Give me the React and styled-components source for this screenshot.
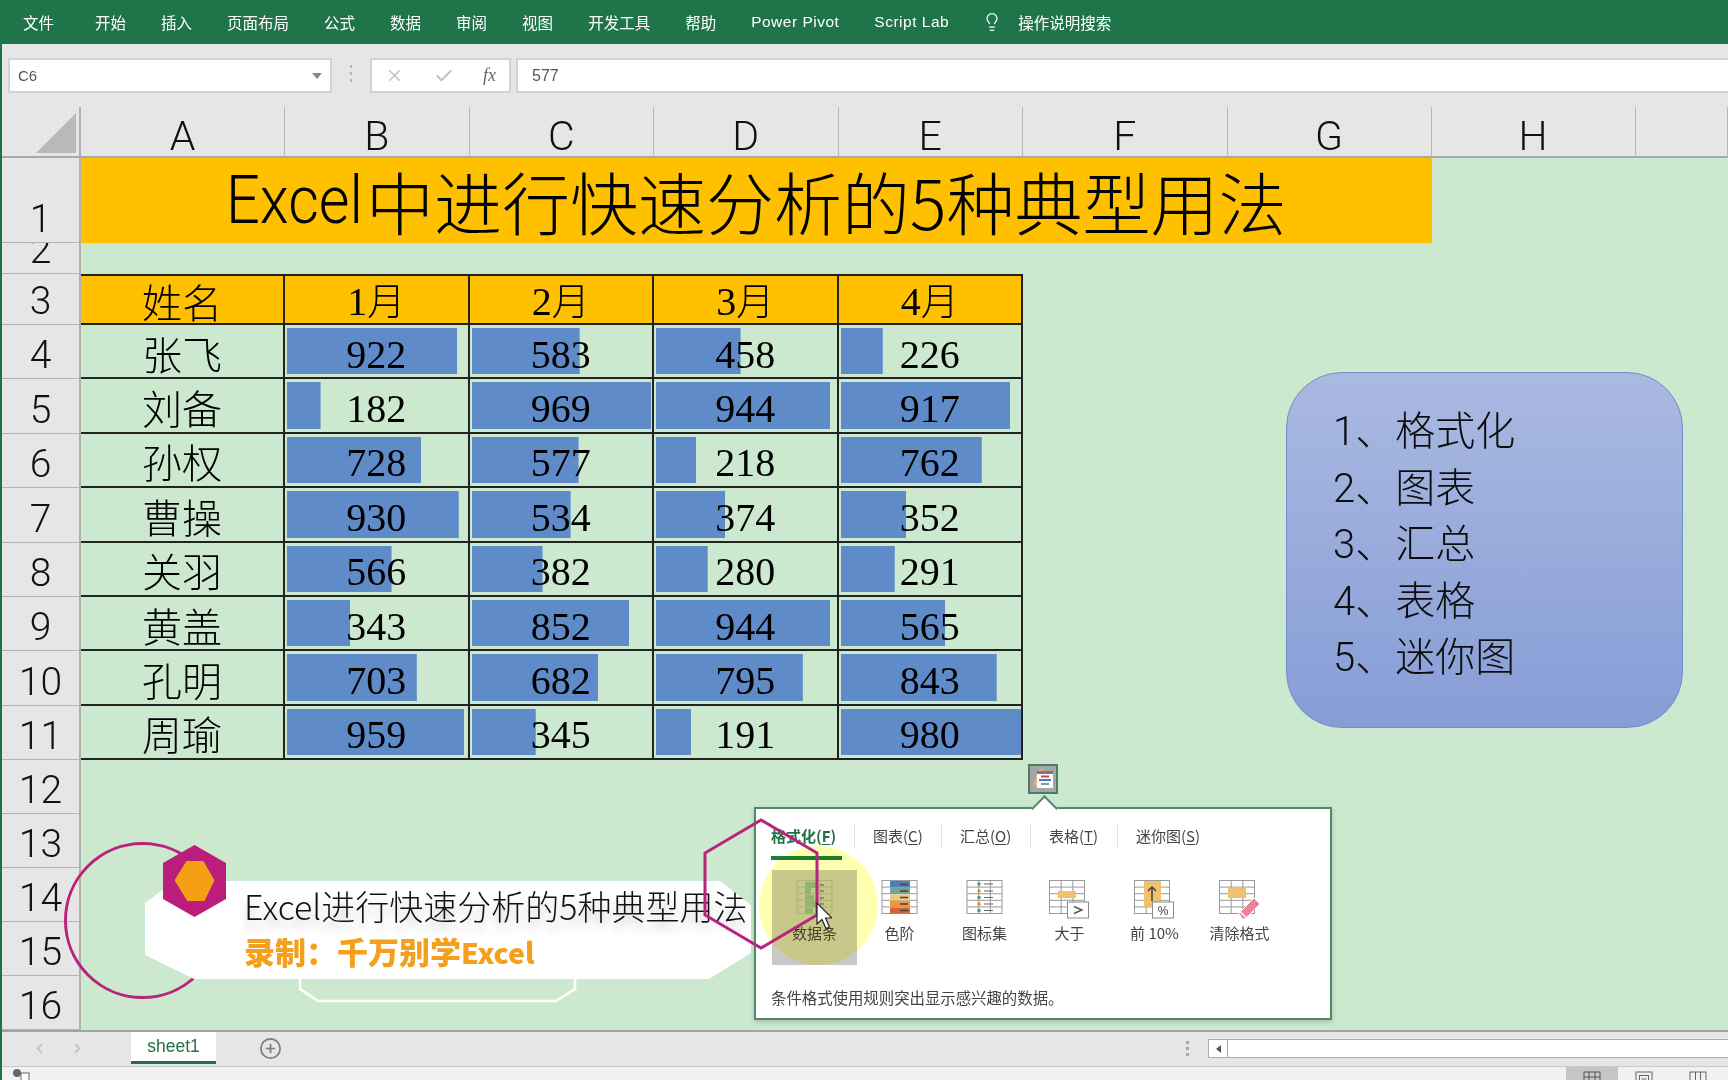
import React from 'react';
import styled, { createGlobalStyle } from 'styled-components';
import { Check, ChevronLeft, ChevronRight, CirclePlus, Lightbulb, X } from 'lucide-react';

const CJK = '"Noto Sans CJK SC", "Liberation Sans", sans-serif';
const GREEN = '#217346';
const MAGENTA = '#b8237b';

const GlobalStyle = createGlobalStyle`
  html, body { margin: 0; padding: 0; background: #e6e6e6; }
  * { box-sizing: border-box; }
`;

const Page = styled.div`
  position: relative;
  display: flex;
  flex-direction: column;
  width: 1728px;
  height: 1080px;
  overflow: hidden;
  font-family: ${CJK};
`;

/* ---------- ribbon ---------- */
const Ribbon = styled.div`
  display: flex;
  align-items: center;
  flex: 0 0 44px;
  gap: 35px;
  padding-left: 23px;
  background: #20744a;
  color: #fff;
  font-size: 15.5px;
`;
const RibbonTab = styled.span`
  margin-right: ${(p) => (p.$first ? '6px' : '0')};
  letter-spacing: ${(p) => (p.$latin ? '0.5px' : '0')};
  font-family: ${(p) => (p.$latin ? '"Liberation Sans", sans-serif' : CJK)};
  white-space: nowrap;
`;
const SearchHint = styled.span`
  display: flex;
  align-items: center;
  gap: 16px;
  margin-left: -2px;
`;

/* ---------- formula bar ---------- */
const Body = styled.div`
  display: flex;
  flex-direction: column;
  flex: 1;
  min-height: 0;
  border-left: 2px solid ${GREEN};
`;
const FormulaBar = styled.div`
  display: flex;
  align-items: flex-start;
  flex: 0 0 63px;
  padding: 14px 0 0 6px;
  background: #e6e6e6;
`;
const Field = styled.div`
  display: flex;
  align-items: center;
  height: 35px;
  background: #fff;
  border: 2px solid #d2d2d2;
  color: #555;
  font-size: 15px;
  font-family: "Liberation Sans", sans-serif;
`;
const NameBox = styled(Field)`
  justify-content: space-between;
  width: 324px;
  padding: 0 8px;
`;
const Caret = styled.span`
  width: 0;
  height: 0;
  border-left: 5px solid transparent;
  border-right: 5px solid transparent;
  border-top: 6px solid #888;
`;
const Grip = styled.span`
  width: 2px;
  height: 20px;
  margin: 7px 18px 0 18px;
  background: repeating-linear-gradient(#b5b5b5 0 3px, transparent 3px 7px);
`;
const ActionBox = styled(Field)`
  justify-content: space-between;
  width: 141px;
  margin-right: 5px;
  padding: 0 13px;
`;
const FxMark = styled.span`
  color: #666;
  font: italic 18px "Liberation Serif", serif;
`;
const FormulaInput = styled(Field)`
  flex: 1;
  padding-left: 14px;
  border-right: 0;
  font-size: 16px;
`;

/* ---------- sheet ---------- */
const Sheet = styled.div`
  display: grid;
  grid-template-columns: 79px 204px repeat(4, 184.5px) 204.5px 204px 204px 1fr;
  grid-template-rows: 51px 85px 31px 51px repeat(8, 54.375px) repeat(5, 54px);
  flex: 0 0 923px;
  background: #cce8cf;
  overflow: hidden;
`;
const Corner = styled.div`
  display: flex;
  align-items: flex-end;
  justify-content: flex-end;
  padding: 0 3px 3px 0;
  background: #e6e6e6;
  border-bottom: 2px solid #a8a8a8;
  border-right: 2px solid #b0b0b0;
`;
const SelectAll = styled.span`
  width: 40px;
  height: 40px;
  background: #b9b9b9;
  clip-path: polygon(100% 0, 100% 100%, 0 100%);
`;
const ColHead = styled.div`
  display: flex;
  align-items: center;
  justify-content: center;
  padding-top: 9px;
  background: #e6e6e6;
  border-bottom: 2px solid #a8a8a8;
  border-right: 1.5px solid #b8b8b8;
  color: #111;
  font: 300 41px Roboto, "Liberation Sans", sans-serif;
`;
const RowHead = styled.div`
  grid-column: 1;
  display: flex;
  align-items: flex-end;
  justify-content: center;
  padding-bottom: 1px;
  background: #e6e6e6;
  border-bottom: 1.5px solid #b4b4b4;
  border-right: 2px solid #b0b0b0;
  color: #111;
  font: 300 39px/1 Roboto, "Liberation Sans", sans-serif;
  overflow: hidden;
  span { margin-bottom: 2px; }
`;
const TitleCell = styled.div`
  grid-column: 2 / span 7;
  display: flex;
  align-items: center;
  justify-content: center;
  background: #ffc000;
  color: #000;
  font-size: 68px;
  font-weight: 300;
  line-height: 1;
  white-space: nowrap;
`;
const TitleLatin = styled.span`
  display: inline-block;
  margin-right: -12px;
  font: 300 66px Roboto, "Liberation Sans", sans-serif;
  transform: scaleX(0.9);
  transform-origin: left center;
`;
const Cell = styled.div`
  display: flex;
  align-items: center;
  justify-content: center;
  border-right: 2px solid #222;
  border-bottom: 2px solid #222;
  border-top: ${(p) => (p.$top ? '2px solid #222' : '0')};
  background-color: ${(p) => (p.$head ? '#ffc000' : 'transparent')};
  color: #000;
  font-size: 38px;
  line-height: 1;
  padding-top: 3px;
`;
const NameCell = styled(Cell)`
  grid-column: 2;
  font-size: 40px;
  font-weight: 300;
`;
const MonthLabel = styled.span`
  font-weight: 300;
  b { font: 40px "Liberation Serif", serif; }
`;
const ValueCell = styled(Cell)`
  padding-top: 7px;
  background-image: linear-gradient(#5f8bc8, #5f8bc8);
  background-repeat: no-repeat;
  background-position: 2px 3px;
  background-size: ${(p) => p.$bar}px calc(100% - 6px);
  font: 40px/1 "Liberation Serif", serif;
`;

/* ---------- text box on the sheet ---------- */
const NoteBox = styled.div`
  position: absolute;
  left: 1286px;
  top: 372px;
  display: flex;
  flex-direction: column;
  width: 397px;
  height: 356px;
  padding: 27px 0 0 46px;
  background: linear-gradient(#aab9e1, #869dd6);
  border: 1.5px solid #6f8fcb;
  border-radius: 56px;
  color: #0d0d0d;
  font-size: 40px;
  line-height: 56px;
`;
const NoteLine = styled.div`
  height: 56.5px;
  white-space: nowrap;
  font-weight: 300;
  span { font-family: Roboto, "Liberation Sans", sans-serif; font-weight: 300; }
`;

/* ---------- recording banner ---------- */
const Ring = styled.div`
  position: absolute;
  left: 64px;
  top: 842px;
  width: 157px;
  height: 157px;
  border: 3px solid ${MAGENTA};
  border-radius: 50%;
`;
const UnderTrim = styled.svg`
  position: absolute;
  left: 296px;
  top: 975px;
`;
const Banner = styled.div`
  position: absolute;
  left: 145px;
  top: 881px;
  display: flex;
  flex-direction: column;
  width: 606px;
  height: 98px;
  padding: 1px 0 0 99px;
  background: #fff;
  clip-path: polygon(0 22px, 30px 0, 575px 0, 606px 24px, 606px 72px, 564px 98px, 49px 98px, 0 74px);
`;
const BannerTitle = styled.div`
  color: #111;
  font-size: 34px;
  line-height: 48px;
  font-weight: 300;
  white-space: nowrap;
  text-shadow: 0 8px 9px rgba(0, 0, 0, 0.22);
`;
const BannerCredit = styled.div`
  color: #f5a01c;
  font-size: 31px;
  line-height: 42px;
  font-weight: 900;
  white-space: nowrap;
  span { font-size: 28.5px; }
`;
const BadgeOuter = styled.div`
  position: absolute;
  left: 163px;
  top: 845px;
  display: flex;
  align-items: center;
  justify-content: center;
  width: 63px;
  height: 72px;
  background: #bb1e7a;
  clip-path: polygon(50% 0, 100% 25%, 100% 75%, 50% 100%, 0 75%, 0 25%);
`;
const BadgeInner = styled.div`
  width: 40px;
  height: 40px;
  background: #f5a014;
  clip-path: polygon(30% 0, 72% 0, 100% 48%, 75% 100%, 32% 100%, 0 48%);
`;
const HexOutline = styled.svg`
  position: absolute;
  left: 700px;
  top: 815px;
  z-index: 5;
`;

/* ---------- quick analysis ---------- */
const SmartTag = styled.div`
  position: absolute;
  left: 1028px;
  top: 764px;
  display: flex;
  align-items: center;
  justify-content: center;
  width: 30px;
  height: 30px;
  background: #a6a6a6;
  border: 2px solid #4d7b64;
`;
const Popup = styled.div`
  position: absolute;
  left: 754px;
  top: 807px;
  display: flex;
  flex-direction: column;
  width: 578px;
  height: 213px;
  padding: 14px 0 0 15px;
  background: #fff;
  border: 2px solid #4f8a68;
  box-shadow: 0 2px 5px rgba(0, 0, 0, 0.18);
  &::before {
    content: '';
    position: absolute;
    left: 279px;
    top: -10px;
    width: 17px;
    height: 17px;
    background: #fff;
    border-top: 2px solid #4f8a68;
    border-left: 2px solid #4f8a68;
    transform: rotate(45deg);
  }
`;
const PopupTabs = styled.div`
  display: flex;
  align-items: center;
  height: 25px;
`;
const PopupTab = styled.span`
  display: block;
  width: ${(p) => p.$width}px;
  padding-left: ${(p) => p.$pad}px;
  border-right: ${(p) => (p.$last ? '0' : '1.5px solid #e2e2e2')};
  color: ${(p) => (p.$active ? '#217346' : '#444')};
  font-size: 15px;
  line-height: 25px;
  font-weight: ${(p) => (p.$active ? 700 : 400)};
  white-space: nowrap;
  u { text-underline-offset: 2px; }
`;
const ActiveLine = styled.div`
  width: 71px;
  height: 3.5px;
  margin: 8px 0 10px 0;
  background: #1f7d3a;
`;
const PopupItems = styled.div`
  display: flex;
  margin-left: 1px;
`;
const PopupItem = styled.div`
  display: flex;
  flex-direction: column;
  align-items: center;
  width: 85px;
  height: 95px;
  padding-top: 10px;
  background: ${(p) => (p.$hover ? '#c8c8c8' : 'transparent')};
  color: #444;
  font-size: 15px;
  line-height: 20px;
`;
const IconSlot = styled.div`
  display: flex;
  align-items: flex-start;
  justify-content: center;
  height: 43px;
`;
const PopupHint = styled.div`
  margin-top: 22px;
  color: #444;
  font-size: 15.4px;
  line-height: 20px;
`;
const Spotlight = styled.div`
  position: absolute;
  left: 759px;
  top: 846px;
  width: 119px;
  height: 119px;
  background: #ffffb0;
  border-radius: 50%;
  mix-blend-mode: multiply;
  z-index: 3;
`;
const Pointer = styled.svg`
  position: absolute;
  left: 816px;
  top: 902px;
  z-index: 6;
`;

/* ---------- bottom bars ---------- */
const TabBar = styled.div`
  display: flex;
  align-items: flex-start;
  flex: 0 0 37px;
  background: #e6e6e6;
  border-top: 2px solid #a3a3a3;
  border-bottom: 1.5px solid #c8c8c8;
`;
const TabArrows = styled.div`
  display: flex;
  gap: 23px;
  width: 129px;
  padding: 9px 0 0 30px;
  color: #c4c4c4;
`;
const SheetTab = styled.div`
  width: 85px;
  height: 32px;
  background: #fff;
  border-bottom: 3px solid ${GREEN};
  color: ${GREEN};
  font: 17.5px/28px "Liberation Sans", sans-serif;
  text-align: center;
`;
const AddSheet = styled.div`
  display: flex;
  margin: 5px 0 0 43px;
  color: #7d7d7d;
`;
const ScrollDots = styled.div`
  width: 3px;
  height: 15px;
  margin: 9px 19px 0 auto;
  background: repeating-linear-gradient(#a8a8a8 0 3px, transparent 3px 6px);
`;
const ScrollTrack = styled.div`
  display: flex;
  flex: 0 0 520px;
  height: 19px;
  margin-top: 7px;
  background: #fff;
  border: 1.5px solid #ababab;
  border-right: 0;
`;
const ScrollButton = styled.div`
  display: flex;
  align-items: center;
  justify-content: center;
  width: 19px;
  border-right: 1.5px solid #ababab;
  color: #555;
  span {
    border-top: 4px solid transparent;
    border-bottom: 4px solid transparent;
    border-right: 5px solid #555;
  }
`;
const StatusBar = styled.div`
  display: flex;
  flex: 1;
  min-height: 0;
  padding-left: 9px;
  background: #f1f1f1;
  overflow: hidden;
`;
const ViewButtons = styled.div`
  display: flex;
  margin-left: auto;
  margin-right: 2px;
`;
const ViewButton = styled.div`
  display: flex;
  justify-content: center;
  width: ${(p) => p.$width}px;
  padding-top: 4px;
  background: ${(p) => (p.$active ? '#c6c6c6' : 'transparent')};
`;

/* ---------- drawings ---------- */
const TableLines = ({ x = 0.5, y = 0.5, w = 35, h = 33, color = '#9a9a9a', rows = 5 }) => {
  const lines = [];
  for (let i = 1; i < rows; i++) lines.push(<path key={i} d={`M${x} ${y + (h / rows) * i}h${w}`} />);
  return (
    <g fill="none" stroke={color} strokeWidth="1">
      <rect x={x} y={y} width={w} height={h} />
      {lines}
      <path d={`M${x + w / 3} ${y}v${h}M${x + (w * 2) / 3} ${y}v${h}`} />
    </g>
  );
};

const DataBarIcon = () => (
  <svg width="38" height="36" viewBox="0 0 38 36">
    <TableLines x={1} color="#b0b0b0" />
    <g fill="#8fb5a2">
      <rect x="9" y="2" width="12" height="6" />
      <rect x="9" y="8" width="6" height="6" />
      <rect x="9" y="15" width="9" height="5" />
      <rect x="9" y="21" width="12" height="6" />
      <rect x="9" y="28" width="8" height="5" />
    </g>
    <path d="M24 5h4M24 11h4M24 18h4M24 24h4M24 30h4" stroke="#555" strokeWidth="1.2" />
  </svg>
);
const ColorScaleIcon = () => (
  <svg width="38" height="36" viewBox="0 0 38 36">
    <TableLines x={1} />
    <rect x="9" y="1" width="20" height="6.5" fill="#4b7fb8" />
    <rect x="9" y="8" width="20" height="6" fill="#6fa591" />
    <rect x="9" y="14.5" width="20" height="6" fill="#f2c77e" />
    <rect x="9" y="21" width="20" height="6" fill="#f0953f" />
    <rect x="9" y="27.5" width="20" height="6" fill="#d9603a" />
    <path d="M19 4.500h8M19 11h8M19 17.500h8M19 24h8M19 30.500h8" stroke="#444" strokeWidth="1.3" />
  </svg>
);
const IconSetIcon = () => (
  <svg width="38" height="36" viewBox="0 0 38 36">
    <TableLines x={1} />
    <g>
      <circle cx="13" cy="4" r="1.8" fill="#4b9a83" />
      <circle cx="13" cy="11" r="1.8" fill="#ef8a2e" />
      <circle cx="13" cy="17.500" r="1.8" fill="#4b9a83" />
      <circle cx="13" cy="24" r="1.8" fill="#ef8a2e" />
      <circle cx="13" cy="30.500" r="1.8" fill="#4b9a83" />
    </g>
    <path d="M18 4h9M18 11h9M18 17.500h9M18 24h9M18 30.500h9" stroke="#666" strokeWidth="1.2" />
  </svg>
);
const GreaterIcon = () => (
  <svg width="42" height="40" viewBox="0 0 42 40">
    <TableLines />
    <rect x="9" y="11" width="18" height="7" fill="#f0c26f" />
    <rect x="18.500" y="22" width="21" height="16" fill="#fff" stroke="#8a8a8a" />
    <path d="M25 26.500l8 3.500-8 3.500" fill="none" stroke="#555" strokeWidth="1.4" />
  </svg>
);
const TopTenIcon = () => (
  <svg width="42" height="40" viewBox="0 0 42 40">
    <TableLines />
    <rect x="10" y="1" width="17" height="26" fill="#f0c26f" />
    <path d="M18 21V7M14 11l4-4 4 4" fill="none" stroke="#444" strokeWidth="1.5" />
    <rect x="18.500" y="22" width="21" height="16" fill="#fff" stroke="#8a8a8a" />
    <text x="29" y="34.500" textAnchor="middle" fontSize="12" fontFamily="Liberation Sans" fill="#444">%</text>
  </svg>
);
const ClearIcon = () => (
  <svg width="42" height="40" viewBox="0 0 42 40">
    <TableLines />
    <rect x="9" y="8" width="18" height="10" fill="#f0c26f" />
    <path d="M20 33l15-15 6 6-15 15h-3z" fill="#e9849b" stroke="#fff" strokeWidth="1" />
    <path d="M21 31.500l7 7" stroke="#fff" strokeWidth="1.2" />
  </svg>
);
const TagIcon = () => (
  <svg width="24" height="24" viewBox="0 0 24 24">
    <path d="M2 18L8 2h4L6 20z" fill="#d8b27c" />
    <rect x="6" y="4" width="16" height="17" fill="#fff" />
    <rect x="6" y="4" width="16" height="3" fill="#7a7a7a" />
    <path d="M10 9.500h8" stroke="#d63f3f" strokeWidth="2" />
    <path d="M8 13h12" stroke="#3f7fc4" strokeWidth="2" />
    <path d="M10 17h8" stroke="#6fa591" strokeWidth="2" />
  </svg>
);
const NormalViewIcon = () => (
  <svg width="18" height="18" viewBox="0 0 18 18" fill="none" stroke="#555">
    <rect x="1" y="1" width="16" height="16" />
    <path d="M1 6h16M1 11h16M6 1v16M12 1v16" />
  </svg>
);
const PageViewIcon = () => (
  <svg width="18" height="18" viewBox="0 0 18 18" fill="none" stroke="#666">
    <rect x="1" y="1" width="16" height="16" />
    <rect x="4.500" y="4.500" width="9" height="10" />
    <path d="M6.500 8h5" />
  </svg>
);
const BreakViewIcon = () => (
  <svg width="18" height="18" viewBox="0 0 18 18" fill="none" stroke="#666">
    <rect x="1" y="1" width="16" height="16" />
    <path d="M6.500 1v16M11.500 1v16" />
  </svg>
);

/* ---------- data ---------- */
const ribbonTabs = ['开始', '插入', '页面布局', '公式', '数据', '审阅', '视图', '开发工具', '帮助'];
const columns = ['B', 'C', 'D', 'E', 'F', 'G', 'H'];
const months = ['1月', '2月', '3月', '4月'];
const people = [
  ['张飞', 922, 583, 458, 226],
  ['刘备', 182, 969, 944, 917],
  ['孙权', 728, 577, 218, 762],
  ['曹操', 930, 534, 374, 352],
  ['关羽', 566, 382, 280, 291],
  ['黄盖', 343, 852, 944, 565],
  ['孔明', 703, 682, 795, 843],
  ['周瑜', 959, 345, 191, 980],
];
const maxValue = 980;
const barWidth = 181;
const notes = [
  ['1', '格式化'],
  ['2', '图表'],
  ['3', '汇总'],
  ['4', '表格'],
  ['5', '迷你图'],
];
const popupTabs = [
  { key: 'F', label: '格式化', width: 84, pad: 0, active: true },
  { key: 'C', label: '图表', width: 87, pad: 18 },
  { key: 'O', label: '汇总', width: 89, pad: 18 },
  { key: 'T', label: '表格', width: 87, pad: 18 },
  { key: 'S', label: '迷你图', width: 110, pad: 18, last: true },
];
const popupItems = [
  { label: '数据条', Icon: DataBarIcon, hover: true },
  { label: '色阶', Icon: ColorScaleIcon },
  { label: '图标集', Icon: IconSetIcon },
  { label: '大于', Icon: GreaterIcon },
  { label: '前 10%', Icon: TopTenIcon },
  { label: '清除格式', Icon: ClearIcon },
];

export default function App() {
  return (
    <Page>
      <GlobalStyle />
      <Ribbon>
        <RibbonTab $first>文件</RibbonTab>
        {ribbonTabs.map((t) => <RibbonTab key={t}>{t}</RibbonTab>)}
        <RibbonTab $latin>Power Pivot</RibbonTab>
        <RibbonTab $latin>Script Lab</RibbonTab>
        <SearchHint>
          <Lightbulb size={20} strokeWidth={1.5} />
          操作说明搜索
        </SearchHint>
      </Ribbon>

      <Body>
        <FormulaBar>
          <NameBox>C6<Caret /></NameBox>
          <Grip />
          <ActionBox>
            <X size={19} color="#c4c4c4" strokeWidth={2} />
            <Check size={20} color="#c4c4c4" strokeWidth={2.5} />
            <FxMark>fx</FxMark>
          </ActionBox>
          <FormulaInput>577</FormulaInput>
        </FormulaBar>

        <Sheet>
          <Corner><SelectAll /></Corner>
          <ColHead>A</ColHead>
          {columns.map((c) => <ColHead key={c}>{c}</ColHead>)}
          <ColHead />

          <RowHead><span>1</span></RowHead>
          <TitleCell><TitleLatin>Excel</TitleLatin>中进行快速分析的5种典型用法</TitleCell>

          <RowHead><span>2</span></RowHead>

          <RowHead><span>3</span></RowHead>
          <NameCell $head $top>姓名</NameCell>
          {months.map((m) => (
            <Cell key={m} $head $top>
              <MonthLabel><b>{m[0]}</b>{m[1]}</MonthLabel>
            </Cell>
          ))}

          {people.map(([name, ...values], i) => (
            <React.Fragment key={name}>
              <RowHead><span>{i + 4}</span></RowHead>
              <NameCell>{name}</NameCell>
              {values.map((v, j) => (
                <ValueCell key={j} $bar={(v / maxValue) * barWidth}>{v}</ValueCell>
              ))}
            </React.Fragment>
          ))}

          {[12, 13, 14, 15, 16].map((n) => <RowHead key={n}><span>{n}</span></RowHead>)}
        </Sheet>

        <TabBar>
          <TabArrows>
            <ChevronLeft size={15} strokeWidth={3} />
            <ChevronRight size={15} strokeWidth={3} />
          </TabArrows>
          <SheetTab>sheet1</SheetTab>
          <AddSheet><CirclePlus size={23} strokeWidth={1.8} /></AddSheet>
          <ScrollDots />
          <ScrollTrack><ScrollButton><span /></ScrollButton></ScrollTrack>
        </TabBar>

        <StatusBar>
          <svg width="20" height="18" viewBox="0 0 20 18">
            <circle cx="6" cy="6" r="4" fill="#666" />
            <rect x="10" y="6" width="8" height="10" fill="#fff" stroke="#666" />
          </svg>
          <ViewButtons>
            <ViewButton $active $width={52}><NormalViewIcon /></ViewButton>
            <ViewButton $width={52}><PageViewIcon /></ViewButton>
            <ViewButton $width={56}><BreakViewIcon /></ViewButton>
          </ViewButtons>
        </StatusBar>
      </Body>

      <NoteBox>
        {notes.map(([n, text]) => (
          <NoteLine key={n}><span>{n}</span>、{text}</NoteLine>
        ))}
      </NoteBox>

      <Ring />
      <UnderTrim width="284" height="30" viewBox="0 0 284 30" fill="none" stroke="#fff" strokeWidth="2.5">
        <path d="M4 0v14l18 12h238l19-12V0" />
      </UnderTrim>
      <Banner>
        <BannerTitle>Excel进行快速分析的5种典型用法</BannerTitle>
        <BannerCredit>录制：千万别学<span>Excel</span></BannerCredit>
      </Banner>
      <BadgeOuter><BadgeInner /></BadgeOuter>

      <SmartTag><TagIcon /></SmartTag>
      <Popup>
        <PopupTabs>
          {popupTabs.map((t) => (
            <PopupTab key={t.key} $width={t.width} $pad={t.pad} $active={t.active} $last={t.last}>
              {t.label}(<u>{t.key}</u>)
            </PopupTab>
          ))}
        </PopupTabs>
        <ActiveLine />
        <PopupItems>
          {popupItems.map(({ label, Icon, hover }) => (
            <PopupItem key={label} $hover={hover}>
              <IconSlot><Icon /></IconSlot>
              {label}
            </PopupItem>
          ))}
        </PopupItems>
        <PopupHint>条件格式使用规则突出显示感兴趣的数据。</PopupHint>
      </Popup>
      <Spotlight />
      <HexOutline width="122" height="138" viewBox="0 0 122 138" fill="none" stroke={MAGENTA} strokeWidth="3">
        <path d="M61 5l56 33v62l-56 33-56-33V38z" />
      </HexOutline>
      <Pointer width="16" height="28" viewBox="0 0 16 28">
        <path d="M1 1v21l5-4.500 4 9 3.500-1.500-4-9h6.500z" fill="#fff" stroke="#222" strokeWidth="1.2" />
      </Pointer>
    </Page>
  );
}
